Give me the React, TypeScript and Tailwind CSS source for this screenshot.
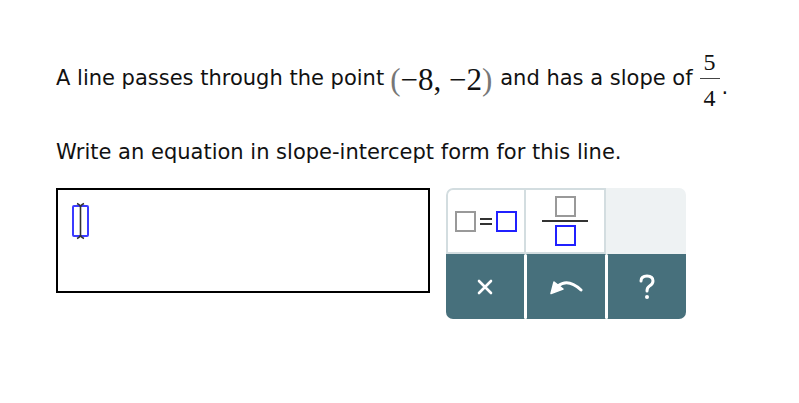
import React from "react";

const Box = ({ color }: { color: string }) => (
  <span className={`inline-block w-[21px] h-[21px] border-2 ${color}`} />
);

const Cursor = () => (
  <div className="relative w-[17px] h-[38px] ml-[14px] mt-[12px]">
    <div className="absolute left-0 top-[3px] w-[17px] h-[32px] border-2 border-[#3b3bff] rounded-[2px]" />
    <svg className="absolute left-0 top-0" width="17" height="38" viewBox="0 0 17 38">
      <path d="M5 1.5 Q8.5 3 8.5 5 Q8.5 3 12 1.5 M8.5 5 V33 M5 36.5 Q8.5 35 8.5 33 Q8.5 35 12 36.5" stroke="#333" strokeWidth="1.6" fill="none" />
    </svg>
  </div>
);

export default function App() {
  const serif = "font-['Liberation_Serif','Times_New_Roman',serif]";
  return (
    <div className="w-[799px] h-[403px] bg-white pl-[56px] pt-[46px] font-['DejaVu_Sans','Verdana',sans-serif] text-[21px] text-[#111]">
      {/* question */}
      <div className="flex items-center h-[66px]">
        <span>A line passes through the point</span>
        <span className={`${serif} text-[31px] ml-[6px] mr-[8px] leading-none`}>
          <span className="text-[#777]">(</span>−8, −2<span className="text-[#777]">)</span>
        </span>
        <span>and has a slope of</span>
        <span className={`${serif} inline-flex flex-col items-center ml-[7px] text-[24px] leading-[20px] mt-[2px]`}>
          <span className="px-[1px]">5</span>
          <span className="w-[20px] h-[1.5px] bg-[#444] mt-[6px] mb-[9px]" />
          <span className="px-[1px]">4</span>
        </span>
        <span className="ml-[2px] mt-[18px]">.</span>
      </div>
      <p className="mt-[25px] leading-[30px]">Write an equation in slope-intercept form for this line.</p>

      {/* answer area */}
      <div className="flex gap-[16px] mt-[21px]">
        <div className="w-[374px] h-[105px] border-2 border-black">
          <Cursor />
        </div>

        <div className="w-[240px] h-[131px] rounded-[7px] overflow-hidden flex flex-col">
          <div className="flex h-[66px] bg-[#eef2f3]">
            <div className="w-[80px] bg-white border-2 border-[#d3dde0] rounded-tl-[7px] flex items-center justify-center gap-[4px]">
              <Box color="border-[#999]" />
              <span className="flex flex-col gap-[3px]">
                <span className="w-[12px] h-[2px] bg-[#333]" />
                <span className="w-[12px] h-[2px] bg-[#333]" />
              </span>
              <Box color="border-[#2020ff]" />
            </div>
            <div className="w-[80px] bg-white border-2 border-l-0 border-[#d3dde0] flex flex-col items-center justify-center">
              <Box color="border-[#999]" />
              <span className="w-[46px] h-[2px] bg-[#333] my-[3px]" />
              <Box color="border-[#2020ff]" />
            </div>
            <div className="flex-1" />
          </div>
          <div className="flex flex-1 bg-[#47707c] text-white">
            <button className="flex-1 flex items-center justify-center">
              <svg width="16" height="16" viewBox="0 0 16 16">
                <path d="M2 2 L14 14 M14 2 L2 14" stroke="white" strokeWidth="2.6" strokeLinecap="round" />
              </svg>
            </button>
            <span className="w-[3px] bg-white rounded-full" />
            <button className="flex-1 flex items-center justify-center">
              <svg width="36" height="16" viewBox="0 0 36 16">
                <path d="M10 7 Q20 -1 33 11" stroke="white" strokeWidth="3" fill="none" strokeLinecap="round" />
                <path d="M3 14.5 L6 3 L15 10 Z" fill="white" stroke="white" strokeWidth="1.5" strokeLinejoin="round" />
              </svg>
            </button>
            <span className="w-[3px] bg-white rounded-full" />
            <button className="flex-1 flex items-center justify-center">
              <svg width="18" height="26" viewBox="0 0 18 26">
                <path d="M3 7 Q3 2 9 2 Q15 2 15 7 Q15 10 11.5 12 Q9 13.5 9 17" stroke="white" strokeWidth="3" fill="none" strokeLinecap="round" />
                <circle cx="9" cy="23" r="2" fill="white" />
              </svg>
            </button>
          </div>
        </div>
      </div>
    </div>
  );
}
